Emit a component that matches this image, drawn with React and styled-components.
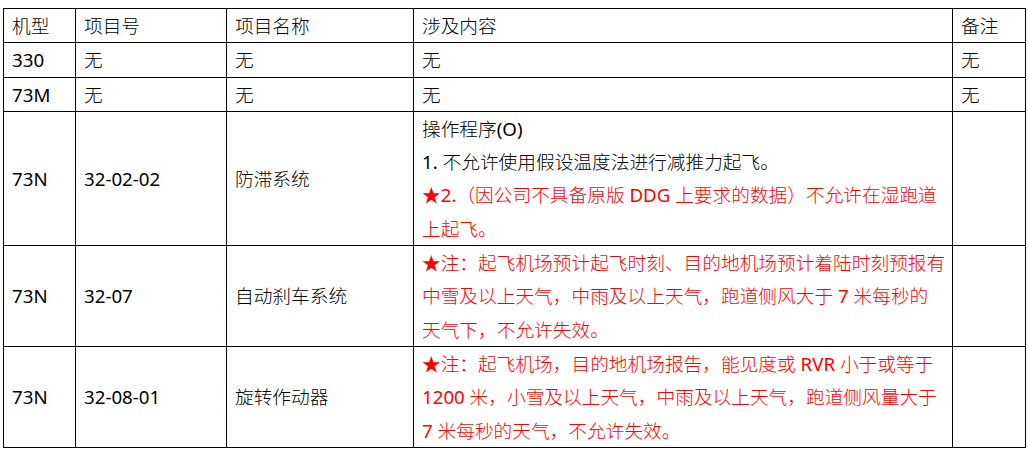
import React from "react";
import styled, { createGlobalStyle } from "styled-components";

const Global = createGlobalStyle`
  html, body { margin: 0; padding: 0; background: #fff; }
  body {
    font-family: "Noto Sans", "Noto Sans CJK SC", sans-serif;
    color: #000;
  }
`;

const Page = styled.div`
  padding: 8px 0 0 3px;
`;

const Table = styled.table`
  border-collapse: collapse;
  table-layout: fixed;
  width: 1022px;
  font-size: 18.7px;
  font-weight: 300;
  line-height: 33.3px;
`;

const Cell = styled.td`
  border: 1px solid #000;
  padding: 0 8px;
  vertical-align: middle;
  white-space: nowrap;
  overflow: hidden;
  color: #000;
`;

const Line = styled.div`
  color: ${(p) => (p.$red ? "#ff0000" : "#000")};
  white-space: nowrap;
`;

const Latin = styled.span`
  font-weight: 400;
`;

const cols = [72, 151, 187, 539, 73];

function Text({ children }) {
  const parts = children.split(/([0-9A-Za-z().\-]+(?: [0-9A-Za-z().\-]+)*)/);
  return parts.map((p, i) =>
    i % 2 === 1 ? <Latin key={i}>{p}</Latin> : <React.Fragment key={i}>{p}</React.Fragment>
  );
}

const rows = [
  { type: "330", no: "无", name: "无", content: [{ t: "无" }], note: "无" },
  { type: "73M", no: "无", name: "无", content: [{ t: "无" }], note: "无" },
  {
    type: "73N",
    no: "32-02-02",
    name: "防滞系统",
    content: [
      { t: "操作程序(O)" },
      { t: "1. 不允许使用假设温度法进行减推力起飞。" },
      { t: "★2.（因公司不具备原版 DDG 上要求的数据）不允许在湿跑道", red: true },
      { t: "上起飞。", red: true },
    ],
    note: "",
  },
  {
    type: "73N",
    no: "32-07",
    name: "自动刹车系统",
    content: [
      { t: "★注：起飞机场预计起飞时刻、目的地机场预计着陆时刻预报有", red: true },
      { t: "中雪及以上天气，中雨及以上天气，跑道侧风大于 7 米每秒的", red: true },
      { t: "天气下，不允许失效。", red: true },
    ],
    note: "",
  },
  {
    type: "73N",
    no: "32-08-01",
    name: "旋转作动器",
    content: [
      { t: "★注：起飞机场，目的地机场报告，能见度或 RVR 小于或等于", red: true },
      { t: "1200 米，小雪及以上天气，中雨及以上天气，跑道侧风量大于", red: true },
      { t: "7 米每秒的天气，不允许失效。", red: true },
    ],
    note: "",
  },
];

export default function App() {
  return (
    <>
      <Global />
      <Page>
        <Table>
          <colgroup>
            {cols.map((w, i) => (
              <col key={i} style={{ width: w }} />
            ))}
          </colgroup>
          <tbody>
            <tr>
              <Cell>机型</Cell>
              <Cell>项目号</Cell>
              <Cell>项目名称</Cell>
              <Cell>涉及内容</Cell>
              <Cell>备注</Cell>
            </tr>
            {rows.map((r, i) => (
              <tr key={i}>
                <Cell><Text>{r.type}</Text></Cell>
                <Cell><Text>{r.no}</Text></Cell>
                <Cell><Text>{r.name}</Text></Cell>
                <Cell>
                  {r.content.map((c, j) => (
                    <Line key={j} $red={c.red}>
                      <Text>{c.t}</Text>
                    </Line>
                  ))}
                </Cell>
                <Cell><Text>{r.note}</Text></Cell>
              </tr>
            ))}
          </tbody>
        </Table>
      </Page>
    </>
  );
}
